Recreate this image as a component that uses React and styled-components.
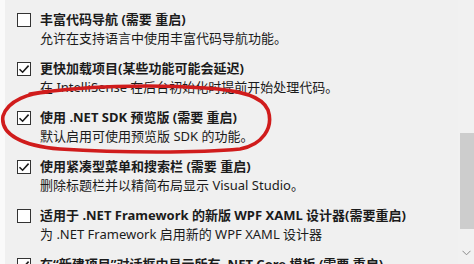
import styled, { createGlobalStyle } from 'styled-components';

const Global = createGlobalStyle`
  html, body {
    margin: 0;
    padding: 0;
    width: 474px;
    height: 264px;
    overflow: hidden;
    background: #f0f0f0;
  }
`;

const options = [
  {
    title: '丰富代码导航 (需要 重启)',
    desc: '允许在支持语言中使用丰富代码导航功能。',
    checked: false,
  },
  {
    title: '更快加载项目(某些功能可能会延迟)',
    desc: '在 IntelliSense 在后台初始化时提前开始处理代码。',
    checked: true,
  },
  {
    title: '使用 .NET SDK 预览版 (需要 重启)',
    desc: '默认启用可使用预览版 SDK 的功能。',
    checked: true,
  },
  {
    title: '使用紧凑型菜单和搜索栏 (需要 重启)',
    desc: '删除标题栏并以精简布局显示 Visual Studio。',
    checked: true,
  },
  {
    title: '适用于 .NET Framework 的新版 WPF XAML 设计器(需要重启)',
    desc: '为 .NET Framework 启用新的 WPF XAML 设计器',
    checked: false,
  },
  {
    title: '在“新建项目”对话框中显示所有 .NET Core 模板 (需要 重启)',
    desc: '',
    checked: true,
  },
];

const App = () => {
  return (
    <>
      <Global />
      <Page>
        <Edge />
        <List>
          {options.map((o) => (
            <Option key={o.title}>
              <Box>
                {o.checked && (
                  <svg width="12" height="12" viewBox="0 0 12 12">
                    <path d="M1.5 6.2 L4.6 9.2 L10.6 2.6" fill="none" stroke="#1a1a1a" strokeWidth="1.6" />
                  </svg>
                )}
              </Box>
              <Text>
                <Title>{o.title}</Title>
                {o.desc && <Desc>{o.desc}</Desc>}
              </Text>
            </Option>
          ))}
        </List>
        <Scrollbar>
          <Thumb />
          <Arrow>
            <svg width="9" height="6" viewBox="0 0 9 6">
              <path d="M0.5 0.8 L4.5 4.8 L8.5 0.8" fill="none" stroke="#8a8a8a" strokeWidth="1" />
            </svg>
          </Arrow>
        </Scrollbar>
        <Scribble width="474" height="264" viewBox="0 0 474 264">
          <path
            d="M48 92 C 30 93, 8 100, 3 116 C 0 134, 22 146, 60 149 C 120 153, 200 153, 240 149 C 262 145, 274 128, 268 110 C 262 96, 240 90, 205 88 C 150 84, 80 86, 30 94"
            fill="none"
            stroke="#d01c1c"
            strokeWidth="3.6"
            strokeLinecap="round"
          />
        </Scribble>
      </Page>
    </>
  );
};

const Page = styled.div`
  position: relative;
  display: flex;
  width: 474px;
  height: 264px;
  overflow: hidden;
  background: #f0f0f0;
  font-family: 'Noto Sans', 'Noto Sans CJK SC', sans-serif;
  color: #1b1b1b;
`;

const Edge = styled.div`
  width: 5px;
  flex-shrink: 0;
  background: #fafafa;
`;

const List = styled.div`
  flex: 1;
  display: flex;
  flex-direction: column;
  gap: 12px;
  padding: 10px 0 0 12px;
`;

const Option = styled.div`
  display: flex;
  gap: 9px;
  align-items: flex-start;
`;

const Box = styled.div`
  width: 14px;
  height: 14px;
  box-sizing: border-box;
  margin-top: 3px;
  border: 1px solid #333;
  background: #fff;
  display: flex;
  align-items: center;
  justify-content: center;
  flex-shrink: 0;
`;

const Text = styled.div`
  display: flex;
  flex-direction: column;
`;

const Title = styled.div`
  font-size: 13px;
  font-weight: 700;
  line-height: 19px;
  white-space: nowrap;
`;

const Desc = styled.div`
  font-size: 13px;
  line-height: 18px;
  white-space: nowrap;
`;

const Scrollbar = styled.div`
  width: 16px;
  flex-shrink: 0;
  display: flex;
  flex-direction: column;
  align-items: flex-end;
  padding-top: 133px;
  background: #f1f1f1;
`;

const Thumb = styled.div`
  width: 14px;
  height: 96px;
  background: #cdcdcd;
`;

const Arrow = styled.div`
  width: 16px;
  display: flex;
  justify-content: center;
  margin-top: 21px;
`;

const Scribble = styled.svg`
  position: absolute;
  left: 0;
  top: 0;
  pointer-events: none;
`;

export default App;
